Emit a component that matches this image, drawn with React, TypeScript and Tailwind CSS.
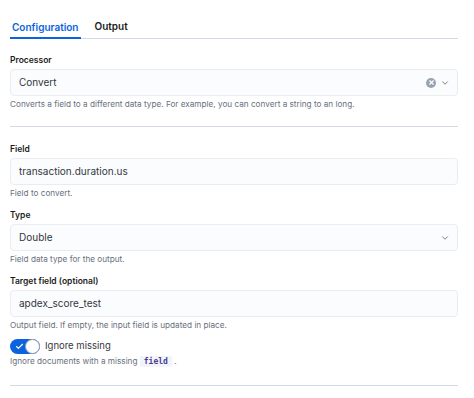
import { ChevronDown, Check, X } from "lucide-react";

const font = { fontFamily: "Inter, 'Noto Sans', sans-serif" };

function Label({ children }: { children: React.ReactNode }) {
    return <div className="text-[8.5px] leading-[12px] font-semibold text-[#1a1c21]">{children}</div>;
}

function Help({ children }: { children: React.ReactNode }) {
    return <div className="mt-[2px] text-[8.2px] leading-[12px] text-[#69707d]">{children}</div>;
}

function Box({ children }: { children: React.ReactNode }) {
    return (
        <div className="mt-[3px] h-[27px] flex items-center pl-[8px] pr-[7px] rounded-[4px] bg-[#fbfcfd] border border-[#e9ecf1] text-[10px] text-[#343741]">
            {children}
        </div>
    );
}

export default function App() {
    return (
        <div className="w-[474px] h-[398px] bg-white px-[10px] pr-[16px]" style={font}>
            {/* Tabs */}
            <div className="flex items-end h-[39px] border-b border-[#d3dae6]">
                <div className="h-[27px] -mb-px px-[2px] flex items-start pt-[8px] border-b-2 border-[#0b64dd] text-[10px] font-semibold text-[#0b64dd]">
                    Configuration
                </div>
                <div className="h-[27px] ml-[12px] px-[2px] flex items-start pt-[8px] text-[10px] font-semibold text-[#1a1c21]">
                    Output
                </div>
            </div>

            {/* Processor */}
            <div className="pt-[15px]">
                <Label>Processor</Label>
                <Box>
                    <span className="flex-1">Convert</span>
                    <span className="w-[10px] h-[10px] rounded-full bg-[#98a2b3] flex items-center justify-center">
                        <X className="w-[7px] h-[7px] text-white" strokeWidth={4} />
                    </span>
                    <ChevronDown className="ml-[4px] w-[10px] h-[10px] text-[#343741]" strokeWidth={1.5} />
                </Box>
                <Help>Converts a field to a different data type. For example, you can convert a string to an long.</Help>
            </div>

            <div className="mt-[16px] border-t border-[#d3dae6]" />

            <div className="pt-[16px]">
                <Label>Field</Label>
                <Box>transaction.duration.us</Box>
                <Help>Field to convert.</Help>
            </div>

            <div className="pt-[10px]">
                <Label>Type</Label>
                <Box>
                    <span className="flex-1">Double</span>
                    <ChevronDown className="w-[10px] h-[10px] text-[#343741]" strokeWidth={1.5} />
                </Box>
                <Help>Field data type for the output.</Help>
            </div>

            <div className="pt-[10px]">
                <Label>Target field (optional)</Label>
                <Box>apdex_score_test</Box>
                <Help>Output field. If empty, the input field is updated in place.</Help>
            </div>

            <div className="pt-[8px]">
                <div className="flex items-center gap-[5px] h-[15px]">
                    <div className="relative w-[30px] h-[15px] rounded-full bg-[#0b64dd]">
                        <Check className="absolute left-[5px] top-[3px] w-[9px] h-[9px] text-white" strokeWidth={3} />
                        <div className="absolute right-0 top-0 w-[15px] h-[15px] rounded-full bg-white border border-[#98a2b3]" />
                    </div>
                    <span className="text-[9.5px] text-[#343741]">Ignore missing</span>
                </div>
                <div className="mt-[1px] text-[8.2px] leading-[12px] text-[#69707d]">
                    Ignore documents with a missing{" "}
                    <code
                        className="px-[4px] py-[1px] rounded-[2px] bg-[#f1f4fa] text-[8px] font-bold text-[#4a3c8c]"
                        style={{ fontFamily: "'DejaVu Sans Mono', monospace" }}
                    >
                        field
                    </code>{" "}
                    .
                </div>
            </div>

            <div className="mt-[17px] border-t border-[#d3dae6]" />
        </div>
    );
}
